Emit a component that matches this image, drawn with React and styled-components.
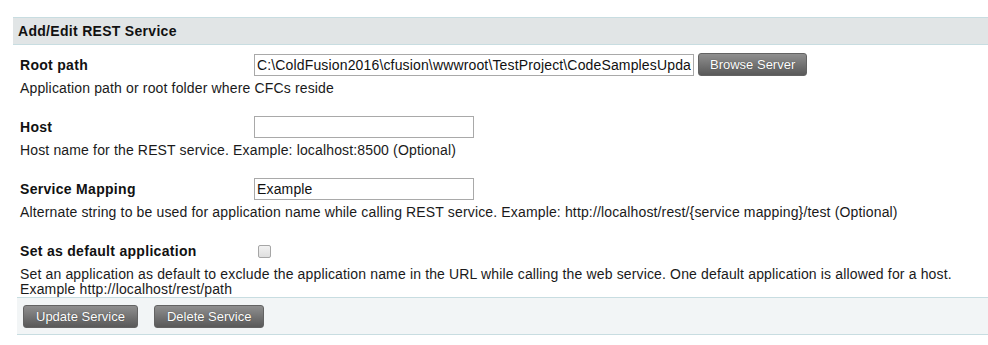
import React from "react";
import styled, { createGlobalStyle } from "styled-components";

const Global = createGlobalStyle`
  html, body { margin: 0; padding: 0; background: #fff; }
  body { font-family: "Liberation Sans", Arial, sans-serif; color: #1a1a1a; }
`;

const Page = styled.div`
  padding-top: 17px;
  width: 988px;
`;

const Header = styled.div`
  margin-left: 13px;
  height: 26px;
  line-height: 26px;
  padding-left: 5px;
  background: #e1e5e6;
  border-top: 1px solid #c8dde1;
  border-bottom: 1px solid #c8dde1;
  font-size: 14px;
  font-weight: bold;
  letter-spacing: 0.3px;
  color: #111;
`;

const Form = styled.div`
  margin-left: 20px;
  display: flex;
  flex-direction: column;
`;

const Section = styled.div`
  margin-top: ${(p) => (p.$first ? "8px" : "20px")};
`;

const FieldRow = styled.div`
  display: flex;
  align-items: center;
  min-height: 22px;
`;

const Label = styled.div`
  width: 234px;
  flex: none;
  font-size: 14px;
  font-weight: bold;
  letter-spacing: 0.3px;
  color: #111;
`;

const TextInput = styled.input`
  box-sizing: border-box;
  width: ${(p) => p.$w}px;
  height: 22px;
  margin: 0;
  padding: 0 2px;
  border: 1px solid #a9a9a9;
  font-family: "Liberation Sans", Arial, sans-serif;
  font-size: 14px;
  letter-spacing: 0.15px;
  color: #111;
  background: #fff;
  outline: none;
`;

const Button = styled.button`
  box-sizing: border-box;
  height: 23px;
  padding: 0 ${(p) => p.$px || 11}px;
  margin: 0;
  border: 1px solid #636363;
  border-radius: 3px;
  background: linear-gradient(#8f8f8f, #595959);
  color: #fff;
  font-family: "Liberation Sans", Arial, sans-serif;
  font-size: 13px;
  text-shadow: 0 0 1px rgba(0, 0, 0, 0.5);
  cursor: pointer;
  margin-left: ${(p) => p.$ml || 0}px;
`;

const Checkbox = styled.input`
  appearance: none;
  box-sizing: border-box;
  width: 13px;
  height: 13px;
  margin: 0 0 0 4px;
  border: 1px solid #a6a6a6;
  border-radius: 2px;
  background: linear-gradient(#f2f2f2, #dedede);
`;

const Desc = styled.div`
  margin-top: 5px;
  font-size: 14px;
  line-height: 15px;
  letter-spacing: 0.15px;
  color: #1a1a1a;
`;

const Footer = styled.div`
  margin-left: 17px;
  padding: 7px 0 6px 6px;
  background: #f2f5f6;
  border-top: 1px solid #c8dde1;
  border-bottom: 1px solid #c8dde1;
  display: flex;
`;

export default function App() {
  return (
    <>
      <Global />
      <Page>
        <Header>Add/Edit REST Service</Header>
        <Form>
          <Section $first>
            <FieldRow>
              <Label>Root path</Label>
              <TextInput
                $w={440}
                defaultValue="C:\ColdFusion2016\cfusion\wwwroot\TestProject\CodeSamplesUpdated"
              />
              <Button $ml={4}>Browse Server</Button>
            </FieldRow>
            <Desc>Application path or root folder where CFCs reside</Desc>
          </Section>
          <Section>
            <FieldRow>
              <Label>Host</Label>
              <TextInput $w={220} defaultValue="" />
            </FieldRow>
            <Desc>Host name for the REST service. Example: localhost:8500 (Optional)</Desc>
          </Section>
          <Section>
            <FieldRow>
              <Label>Service Mapping</Label>
              <TextInput $w={220} defaultValue="Example" />
            </FieldRow>
            <Desc>
              Alternate string to be used for application name while calling REST service. Example:
              http://localhost/rest/{"{service mapping}"}/test (Optional)
            </Desc>
          </Section>
          <Section>
            <FieldRow>
              <Label>Set as default application</Label>
              <Checkbox type="checkbox" />
            </FieldRow>
            <Desc>
              Set an application as default to exclude the application name in the URL while calling the
              web service. One default application is allowed for a host.
              <br />
              Example http://localhost/rest/path
            </Desc>
          </Section>
        </Form>
        <Footer>
          <Button $px={12}>Update Service</Button>
          <Button $px={12} $ml={16}>Delete Service</Button>
        </Footer>
      </Page>
    </>
  );
}
